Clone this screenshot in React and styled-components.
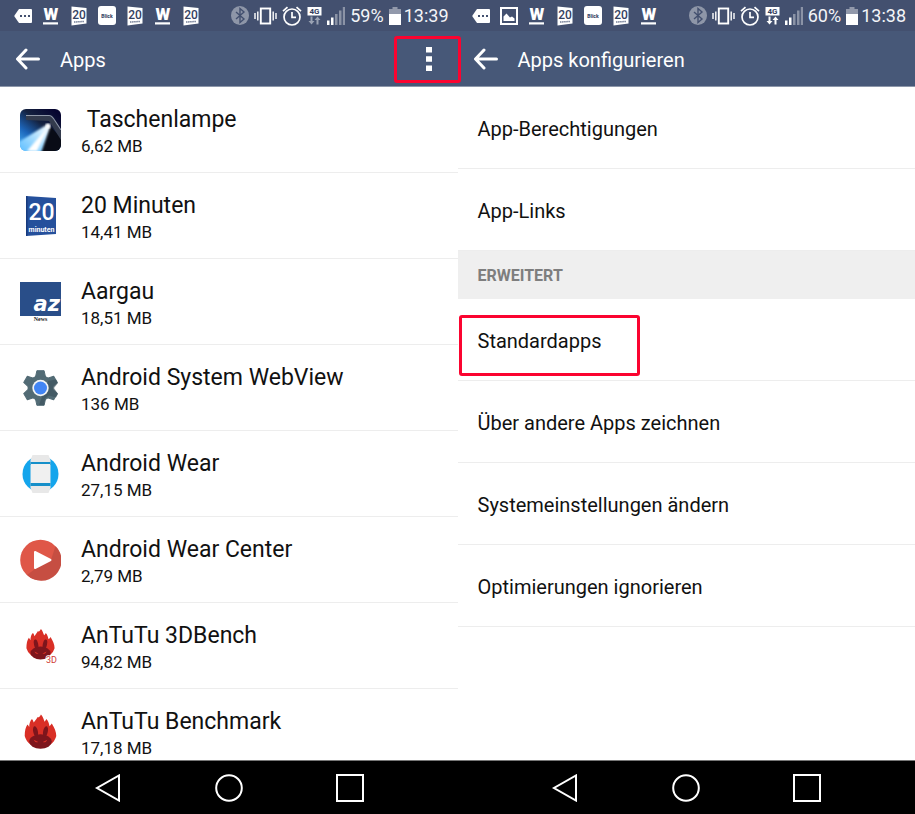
import React from "react";
import styled, { createGlobalStyle, css } from "styled-components";

const GlobalStyle = createGlobalStyle`
  * { box-sizing: border-box; }
  body { margin: 0; background: #fff; font-family: Roboto, "Liberation Sans", sans-serif; color: #111; }
  button { font: inherit; color: inherit; background: none; border: 0; padding: 0; margin: 0; cursor: pointer; }
  ul { list-style: none; margin: 0; padding: 0; }
  h1, h2 { margin: 0; }
  svg { display: block; flex: none; }
`;

const Page = styled.main`
  display: grid;
  grid-template-columns: 1fr 1fr;
  height: 100vh;
`;

const Screen = styled.section`
  display: flex;
  flex-direction: column;
  min-width: 0;
  min-height: 0;
`;

const StatusBar = styled.div`
  flex: none;
  display: flex;
  justify-content: space-between;
  align-items: center;
  height: 31px;
  padding: 0 9px;
  background: #43506f;
  color: #f4f5f8;
`;

const Notifications = styled.div`
  display: flex;
  align-items: center;
`;

const NoticeSlot = styled.span`
  display: flex;
  justify-content: center;
  width: 28px;
`;

const SystemStatus = styled.div`
  display: flex;
  align-items: center;
  gap: 5px;
  font-size: 18px;
  line-height: 24px;
`;

const Clock = styled.span`
  display: flex;
  align-items: center;
  gap: 3px;
`;

const AppBar = styled.header`
  flex: none;
  display: flex;
  align-items: center;
  height: 56px;
  padding-left: 15px;
  background: #475878;
  border-bottom: 1px solid #8d97aa;
  color: #fff;
`;

const IconButton = styled.button`
  display: grid;
  place-items: center;
`;

const Title = styled.h1`
  flex: 1;
  padding: 2px 0 0 19px;
  font-size: 20px;
  line-height: 24px;
  font-weight: 400;
`;

const ring = css`
  position: relative;
  &::after {
    content: "";
    position: absolute;
    z-index: 1;
    border: 3px solid #fb0430;
    border-radius: 3px;
    pointer-events: none;
  }
`;

const MenuButton = styled(IconButton)`
  ${ring}
  width: 58px;
  height: 46px;
  &::after {
    inset: 0 -3px -1px -6px;
  }
`;

const List = styled.ul`
  flex: 1;
  min-height: 0;
  overflow: hidden;
`;

const AppRow = styled.button`
  display: flex;
  align-items: center;
  gap: 20px;
  width: 100%;
  height: 86px;
  padding: 0 20px;
  border-bottom: 1px solid #ededed;
  text-align: left;
`;

const AppText = styled.span`
  display: flex;
  flex-direction: column;
  padding-top: 5px;
`;

const AppName = styled.span`
  font-size: 23px;
  line-height: 28px;
  white-space: pre;
`;

const AppSize = styled.span`
  font-size: 17px;
  line-height: 24px;
`;

const OptionRow = styled.button`
  display: flex;
  align-items: center;
  width: 100%;
  height: 82px;
  padding: 2px 20px 0;
  border-bottom: 1px solid #ededed;
  font-size: 20px;
  line-height: 24px;
  text-align: left;
`;

const OptionLabel = styled.span`
  ${({ $marked }) =>
    $marked &&
    css`
      ${ring}
      &::after {
        inset: -14px -38px -23px -19px;
      }
    `}
`;

const SectionTitle = styled.h2`
  height: 48px;
  padding: 0 20px;
  background: #efefef;
  color: #7e7e7e;
  font-size: 16px;
  line-height: 49px;
  font-weight: 700;
`;

const NavBar = styled.nav`
  flex: none;
  display: grid;
  grid-template-columns: repeat(3, 121px);
  justify-content: center;
  height: 54px;
  background: #000;
  border-top: 1px solid #777;
`;

/* ---------- status icons ---------- */

const MoreTag = () => (
  <svg width="18" height="18" viewBox="0 0 18 18">
    <path d="M5 2h12a1 1 0 0 1 1 1v12a1 1 0 0 1-1 1H5L.6 9.8a1.400 1.400 0 0 1 0-1.600z" fill="#fff" />
    <path d="M6 8h2v2H6zM10 8h2v2h-2zM14 8h2v2h-2z" fill="#43506f" />
  </svg>
);
const WIcon = () => (
  <svg width="20" height="24" viewBox="0 0 20 24">
    <text x="10" y="16" textAnchor="middle" fontFamily="Roboto" fontWeight="900" fontSize="17" fill="#fff">W</text>
    <path d="M2 18.300h15v2.200H2z" fill="#fff" />
  </svg>
);
const TwentyIcon = () => (
  <svg width="16" height="20" viewBox="0 0 16 20">
    <path d="M.5.500 15.500 2v15.500L.5 19.500z" fill="#fff" />
    <text x="8" y="13" textAnchor="middle" fontFamily="Roboto" fontWeight="500" fontSize="12" fill="#34415f">20</text>
    <path d="M3 16 13 15.500" stroke="#707b94" strokeWidth="1.500" strokeDasharray="1.500 .6" />
  </svg>
);
const BlickIcon = () => (
  <svg width="18" height="19" viewBox="0 0 18 19">
    <rect width="18" height="19" rx="3" fill="#fff" />
    <text x="9" y="11.500" textAnchor="middle" fontFamily="Roboto" fontWeight="900" fontSize="5" fill="#3b4866">Blick</text>
  </svg>
);
const PictureIcon = () => (
  <svg width="18" height="18" viewBox="0 0 18 18">
    <rect x="1" y="1" width="16" height="16" fill="none" stroke="#fff" strokeWidth="2" />
    <path d="M3.500 14V9.500l3-3 3.500 4 2-1 2.500 2V14z" fill="#fff" />
  </svg>
);
const Bluetooth = () => (
  <svg width="18" height="19" viewBox="0 0 18 19">
    <ellipse cx="9" cy="9.500" rx="9" ry="9.500" fill="#8e96a8" />
    <path d="m5 6 8 7-4 3.500v-14L13 6l-8 7" fill="none" stroke="#43506f" strokeWidth="1.400" />
  </svg>
);
const Vibrate = () => (
  <svg width="23" height="18" viewBox="0 0 23 18">
    <rect x="6.800" y="1.500" width="9.400" height="15" fill="none" stroke="#fff" strokeWidth="1.900" />
    <path d="M1 6v6M3.800 4.500v9M19.200 4.500v9M22 6v6" stroke="#fff" strokeWidth="1.400" />
  </svg>
);
const Alarm = () => (
  <svg width="20" height="20" viewBox="0 0 20 20" fill="none" stroke="#fff" strokeWidth="1.700">
    <circle cx="10" cy="11" r="8" />
    <path d="M10 6v5.400h4M1 5.200l4.500-4M19 5.200l-4.500-4" />
  </svg>
);
const FourG = ({ active }) => (
  <svg width="15" height="18" viewBox="0 0 15 18">
    <rect x=".5" width="14" height="8.500" fill="#fff" />
    <text x="7.500" y="7.400" textAnchor="middle" fontFamily="Roboto" fontWeight="700" fontSize="8" fill="#34415f">4G</text>
    <path d="M3.500 9.500h2V14h2L4.500 17.500 1.500 14h2zM9.500 17.500h2V13h2l-3-3.500-3 3.500h2z" fill={active ? "#fff" : "#9aa2b3"} />
  </svg>
);
const Signal = () => (
  <svg width="18" height="18" viewBox="0 0 18 18">
    <path d="M0 13.500h2.500V18H0zM4 10.500h2.500V18H4z" fill="#fff" />
    <path d="M8 7h2.500v11H8zM12 3.500h2.500V18H12zM15.800 0H18v18h-2.200z" fill="#8b93a6" />
  </svg>
);
const Battery = () => (
  <svg width="12" height="18" viewBox="0 0 12 18">
    <path d="M3.500 0h5v2H12v5H0V2h3.500z" fill="#9299ab" />
    <path d="M0 7h12v11H0z" fill="#fff" />
  </svg>
);
const BackArrow = () => (
  <svg width="26" height="22" viewBox="0 0 26 22" fill="none" stroke="#fff" strokeWidth="3" strokeLinecap="round" strokeLinejoin="round">
    <path d="M11 2 2.500 11l8.500 9M3 11h20.500" />
  </svg>
);
const Dots = () => (
  <svg width="6" height="24" viewBox="0 0 6 24">
    <path d="M0 0h6v5.500H0zM0 9.300h6v5.500H0zM0 18.500h6V24H0z" fill="#fff" />
  </svg>
);

/* ---------- app icons ---------- */

const TorchLogo = () => (
  <svg width="41" height="42" viewBox="0 0 41 42">
    <defs>
      <clipPath id="torchClip"><rect width="41" height="42" rx="6" /></clipPath>
      <linearGradient id="torchBg" x1="0" y1="1" x2=".8" y2="0">
        <stop offset="0" stopColor="#4dbcff" />
        <stop offset=".35" stopColor="#1c64b8" />
        <stop offset=".65" stopColor="#14213f" />
        <stop offset="1" stopColor="#060530" />
      </linearGradient>
      <linearGradient id="torchBeam" x1="1" y1="0" x2="0" y2="1">
        <stop offset="0" stopColor="#fff" />
        <stop offset=".5" stopColor="#a5dcff" />
        <stop offset="1" stopColor="#51b9ff" />
      </linearGradient>
      <filter id="torchSoft"><feGaussianBlur stdDeviation="1.200" /></filter>
    </defs>
    <g clipPath="url(#torchClip)">
      <rect width="41" height="42" fill="url(#torchBg)" />
      <path d="M20 42 30 17l11 12v13z" fill="#090c16" />
      <path d="M6 7h23c3 0 4 2 6 5l6 10v9L29 12 6 11z" fill="#333b4d" />
      <path d="M6 6.500h23c3 0 4 2 5.500 4.500L41 21" fill="none" stroke="#8f98a8" strokeWidth="1.100" />
      <path d="M-3 34 28 15l2 3-9 26H-3z" fill="url(#torchBeam)" filter="url(#torchSoft)" />
      <path d="m7 42 21-24-11 24z" fill="#fff" filter="url(#torchSoft)" />
      <circle cx="28" cy="17" r="2.500" fill="#fff" filter="url(#torchSoft)" />
    </g>
  </svg>
);
const MinutenLogo = () => (
  <svg width="41" height="42" viewBox="0 0 41 42">
    <path d="M6 1 36 3v36L6 41z" fill="#25509c" />
    <path d="M6 1 7.500 1.200v39.600L6 41z" fill="#173a7d" />
    <text x="21.500" y="25" textAnchor="middle" fontFamily="Roboto" fontWeight="500" fontSize="23" fill="#fff">20</text>
    <text x="21.500" y="37" textAnchor="middle" fontFamily="Roboto" fontWeight="700" fontSize="7" fill="#fff">minuten</text>
  </svg>
);
const AzLogo = () => (
  <svg width="41" height="42" viewBox="0 0 41 42">
    <rect y="1" width="41" height="34" fill="#294e89" />
    <text x="40" y="30" textAnchor="end" fontFamily="DejaVu Sans" fontWeight="700" fontStyle="italic" fontSize="21" fill="#fff">az</text>
    <text x="20.500" y="40" textAnchor="middle" fontFamily="Liberation Serif" fontWeight="700" fontSize="6" fill="#222">News</text>
  </svg>
);
const WebViewLogo = () => (
  <svg width="41" height="42" viewBox="0 0 41 42">
    <g fill="#526b75" stroke="#526b75" strokeWidth="1" strokeLinejoin="round">
      <circle cx="20.500" cy="21" r="12.500" />
      {[0, 60, 120, 180, 240, 300].map((a) => (
        <path key={a} transform={`rotate(${a} 20.500 21)`} d="m15.500 10 1.400-6.300h7.200L25.500 10z" />
      ))}
    </g>
    <path d="m28 14 8-1.500L38 16l-4 5 4 6-2 3.500-7-2-4 3-1 6.500h-5z" fill="#3c525c" opacity=".65" />
    <circle cx="20.500" cy="21" r="8.200" fill="#f2f4f5" />
    <circle cx="20.500" cy="21" r="6.500" fill="#4285f4" />
  </svg>
);
const WearLogo = () => (
  <svg width="41" height="42" viewBox="0 0 41 42">
    <circle cx="20.500" cy="21" r="18" fill="#14a5ec" />
    <path d="M12.500 2h16l2 5v28l-2 5h-16l-2-5V7z" fill="#e8e8e8" />
    <path d="M10.500 9h20v3h-20zM10.500 30h20v3h-20z" fill="#168fc9" />
    <rect x="11" y="11" width="19" height="19" fill="#f0f0f0" />
  </svg>
);
const WearCenterLogo = () => (
  <svg width="41" height="42" viewBox="0 0 41 42">
    <circle cx="20.500" cy="21" r="20.300" fill="#df5748" />
    <path d="m31 21 4.500-14A20.300 20.300 0 0 1 7 36l8-6z" fill="#c64e42" />
    <path d="M15 13v16l15.500-8z" fill="#fff" stroke="#fff" strokeWidth="2" strokeLinejoin="round" />
  </svg>
);
const Flame = () => (
  <>
    <path d="M21 1c2 2 3 5 4 8 1-1 1.500-2 2-3 2 2 3 5 3.500 8 1-1 2-2 2.500-3 3 5 5 9 5 14a18 17 0 0 1-35 0c0-6 1-10 3-13 1 1 1.500 2 2 3 0-4 1-7 3-9 1 1 1.500 2 2 4 2-3 4-5 4-6 1 0 2 1 4-3z" fill="#d92f26" />
    <g fill="#7d151c">
      <ellipse cx="20.500" cy="31" rx="12.500" ry="8" />
      <ellipse cx="15" cy="20" rx="2.600" ry="6" transform="rotate(-12 15 20)" />
      <ellipse cx="26" cy="20" rx="2.600" ry="6" transform="rotate(12 26 20)" />
    </g>
    <path d="m13 29 5 2.500c-2 1-4 0-5-2.500zM28 29l-5 2.500c2 1 4 0 5-2.500z" fill="#d92f26" />
  </>
);
const BenchLogo = () => (
  <svg width="41" height="42" viewBox="0 0 41 42">
    <svg x="2" y="2" width="37" height="39" viewBox="0 0 41 42"><Flame /></svg>
  </svg>
);
const Bench3DLogo = () => (
  <svg width="41" height="42" viewBox="0 0 41 42">
    <svg x="4" y="3" width="33" height="34" viewBox="0 0 41 42"><Flame /></svg>
    <text x="31.500" y="38" textAnchor="middle" fontFamily="Roboto" fontSize="9" fill="#cf3b35" stroke="#fff" strokeWidth="1.500" paintOrder="stroke">3D</text>
  </svg>
);

const notices = {
  more: MoreTag,
  w: WIcon,
  twenty: TwentyIcon,
  blick: BlickIcon,
  picture: PictureIcon,
};

const Status = ({ items, level, time, active }) => (
  <StatusBar>
    <Notifications>
      {items.map((name, i) => {
        const Icon = notices[name];
        return <NoticeSlot key={i}><Icon /></NoticeSlot>;
      })}
    </Notifications>
    <SystemStatus>
      <Bluetooth />
      <Vibrate />
      <Alarm />
      <FourG active={active} />
      <Signal />
      <span>{level}</span>
      <Clock><Battery />{time}</Clock>
    </SystemStatus>
  </StatusBar>
);

const Navigation = () => (
  <NavBar>
    <IconButton aria-label="Zurück">
      <svg width="28" height="28" viewBox="0 0 28 28"><path d="M25 1.500v25L3 14z" fill="none" stroke="#fff" strokeWidth="2" /></svg>
    </IconButton>
    <IconButton aria-label="Startseite">
      <svg width="28" height="28" viewBox="0 0 28 28"><circle cx="14" cy="14" r="12.800" fill="none" stroke="#fff" strokeWidth="2" /></svg>
    </IconButton>
    <IconButton aria-label="Übersicht">
      <svg width="28" height="28" viewBox="0 0 28 28"><path d="M1 1h26v26H1z" fill="none" stroke="#fff" strokeWidth="2" /></svg>
    </IconButton>
  </NavBar>
);

const apps = [
  ["\u00a0Taschenlampe", "6,62 MB", TorchLogo],
  ["20 Minuten", "14,41 MB", MinutenLogo],
  ["Aargau", "18,51 MB", AzLogo],
  ["Android System WebView", "136 MB", WebViewLogo],
  ["Android Wear", "27,15 MB", WearLogo],
  ["Android Wear Center", "2,79 MB", WearCenterLogo],
  ["AnTuTu 3DBench", "94,82 MB", Bench3DLogo],
  ["AnTuTu Benchmark", "17,18 MB", BenchLogo],
];

const Option = ({ children, marked }) => (
  <li>
    <OptionRow><OptionLabel $marked={marked}>{children}</OptionLabel></OptionRow>
  </li>
);

export default function App() {
  return (
    <>
      <GlobalStyle />
      <Page>
        <Screen>
          <Status items={["more", "w", "twenty", "blick", "twenty", "w", "twenty"]} level="59%" time="13:39" />
          <AppBar>
            <IconButton aria-label="Zurück"><BackArrow /></IconButton>
            <Title>Apps</Title>
            <MenuButton aria-label="Weitere Optionen"><Dots /></MenuButton>
          </AppBar>
          <List>
            {apps.map(([name, size, Logo]) => (
              <li key={name}>
                <AppRow>
                  <Logo />
                  <AppText>
                    <AppName>{name}</AppName>
                    <AppSize>{size}</AppSize>
                  </AppText>
                </AppRow>
              </li>
            ))}
          </List>
          <Navigation />
        </Screen>
        <Screen>
          <Status items={["more", "picture", "w", "twenty", "blick", "twenty", "w"]} level="60%" time="13:38" active />
          <AppBar>
            <IconButton aria-label="Zurück"><BackArrow /></IconButton>
            <Title>Apps konfigurieren</Title>
          </AppBar>
          <List>
            <Option>App-Berechtigungen</Option>
            <Option>App-Links</Option>
            <li><SectionTitle>ERWEITERT</SectionTitle></li>
            <Option marked>Standardapps</Option>
            <Option>Über andere Apps zeichnen</Option>
            <Option>Systemeinstellungen ändern</Option>
            <Option>Optimierungen ignorieren</Option>
          </List>
          <Navigation />
        </Screen>
      </Page>
    </>
  );
}
